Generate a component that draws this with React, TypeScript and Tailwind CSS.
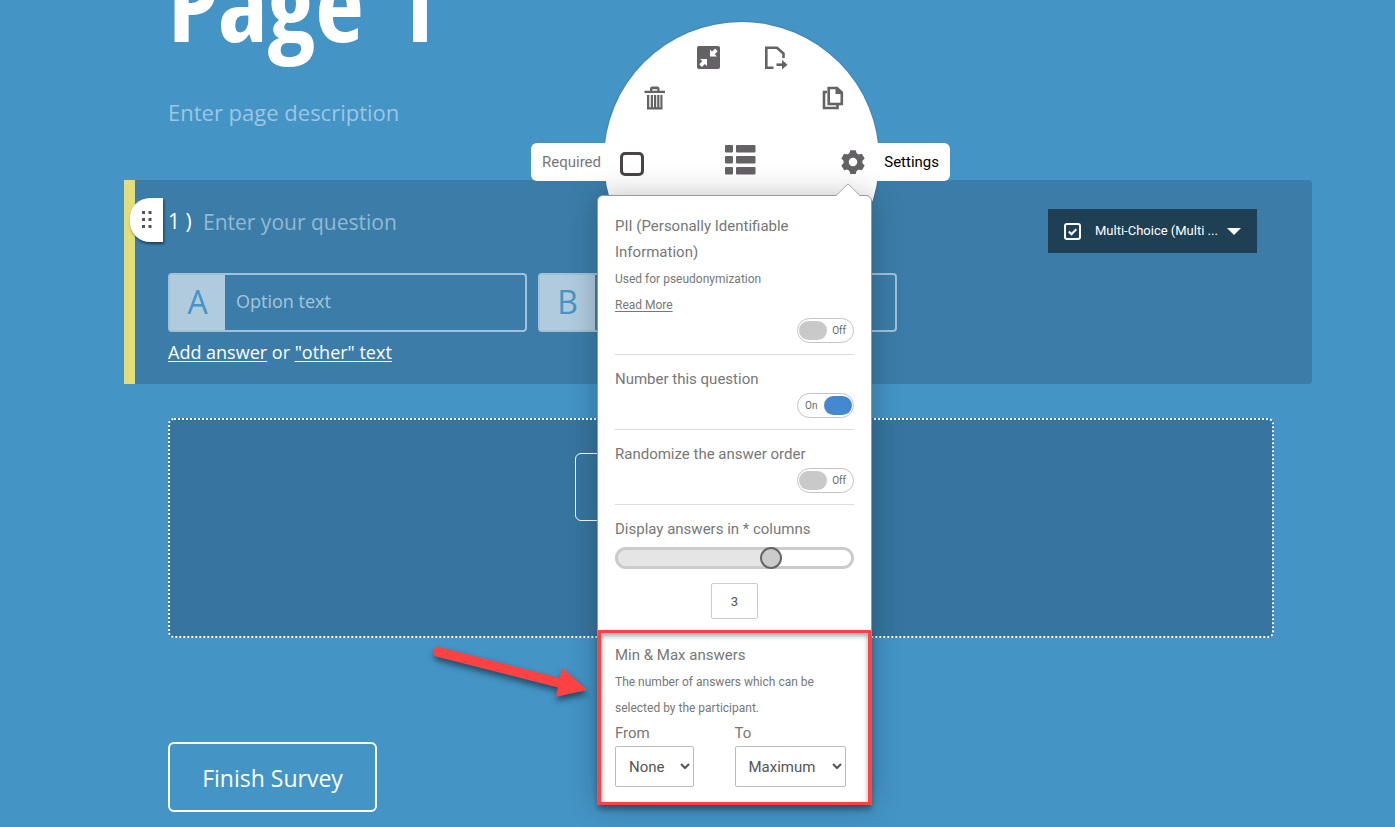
import { useState } from 'react';
import type { ReactNode } from 'react';

/* ---------- icons ---------- */

function TrashIcon() {
  return (
    <svg width="22" height="24" viewBox="0 0 22 24" fill="#646264">
      <path d="M0.500 4.700h5.500V2.600Q6.300 0.500 8 0.500h5.500Q15.200 0.500 15.500 2.600V4.700h5.500v2.300h-20.500zM8.300 4.700h5V3.200h-5z" fillRule="evenodd" />
      <path d="M3 9h2.300V21.200h1.500V9h2.200V21.200h1V9h2.200V21.200h1V9h2.200V21.200h1V9H18.500V23.500H3z" />
    </svg>
  );
}

function CollapseIcon() {
  return (
    <svg width="23" height="23" viewBox="0 0 23 23">
      <rect width="23" height="23" rx="2" fill="#646264" />
      <path d="M13 3.500v7h7l-2.300-2.300 3-3-2.600-2.600-3 3z" fill="#fff" />
      <path d="M10 20v-7H3l2.300 2.300-3 3 2.600 2.600 3-3z" fill="#fff" />
    </svg>
  );
}

function MovePageIcon() {
  return (
    <svg width="24" height="24" viewBox="0 0 24 24" fill="none" stroke="#646264" strokeWidth="2.600">
      <path d="M9.500 21.700H2.300V1.800H13L19.500 7.500V12" />
      <path d="M12.500 18.700H19" />
      <path d="M18 14l5.500 4.700-5.500 4.700z" fill="#646264" stroke="none" />
    </svg>
  );
}

function CopyIcon() {
  return (
    <svg width="22" height="24" viewBox="0 0 22 24" fill="none" stroke="#646264" strokeWidth="2.600">
      <path d="M6.700 2H15L19.800 6.500V18H6.700z" />
      <path d="M13.500 1v7H21L14.500 1z" fill="#646264" stroke="none" />
      <path d="M5 6H2V22H15.500V18" />
    </svg>
  );
}

function ListIcon() {
  return (
    <svg width="31" height="30" viewBox="0 0 31 30" fill="#646264">
      {[0, 11, 22].map((y) => (
        <g key={y}>
          <rect x="0" y={y} width="8" height="7.500" rx="1" />
          <rect x="11" y={y} width="19.500" height="7.500" rx="1" />
        </g>
      ))}
    </svg>
  );
}

function GearIcon() {
  return (
    <svg width="30" height="30" viewBox="-12 -12 24 24" fill="#646264">
      <circle r="5.500" fill="none" stroke="#646264" strokeWidth="4.200" />
      {[0, 60, 120, 180, 240, 300].map((angle) => (
        <path key={angle} d="M-3.200 -6L-2.200 -9.500H2.200L3.200 -6z" transform={`rotate(${angle})`} />
      ))}
    </svg>
  );
}

function GripIcon() {
  return (
    <svg width="10" height="18" viewBox="0 0 10 18" fill="#555">
      {[0, 7, 14].map((y) => (
        <g key={y}>
          <rect x="0" y={y} width="3" height="3" />
          <rect x="6.500" y={y} width="3" height="3" />
        </g>
      ))}
    </svg>
  );
}

/* ---------- settings popover parts ---------- */

function Toggle({ label, initial }: { label: string; initial: boolean }) {
  const [on, setOn] = useState(initial);
  return (
    <label className="relative ml-auto flex h-[25px] w-[57px] cursor-pointer items-center justify-between rounded-full border border-[#c4c4c4] bg-white px-px text-[10px] text-[#666]">
      <input
        type="checkbox"
        className="sr-only"
        aria-label={label}
        checked={on}
        onChange={(e) => setOn(e.target.checked)}
      />
      {on && <span className="pl-1.5">On</span>}
      <span className={`h-[19px] w-7 rounded-full ${on ? 'bg-[#4489d0]' : 'bg-[#c9c9c9]'}`} />
      {!on && <span className="pr-1.5">Off</span>}
    </label>
  );
}

function SettingRow({ title, children }: { title: string; children?: ReactNode }) {
  return (
    <div className="mb-[11px] border-b border-[#dcdcdc] pb-[11px]">
      <p className="mb-px">{title}</p>
      {children}
    </div>
  );
}

function SettingsPopover() {
  const [columns, setColumns] = useState(3);

  return (
    <section
      aria-label="Question settings"
      className="absolute left-[597px] top-[195px] w-[275px] rounded-t-md border border-[#999] bg-white font-['Roboto',sans-serif] text-[15px] leading-[26px] text-[#777] shadow-[0_0_30px_rgba(0,0,0,0.25)]"
    >
      <svg className="absolute -top-[13px] right-[11px]" width="24" height="14" viewBox="0 0 24 14">
        <path d="M0 14V13L12 1l12 12v1z" fill="#fff" />
        <path d="M0 12.500L12 1l12 11.500" fill="none" stroke="#aaa" />
      </svg>

      <div className="px-[17px] pt-[17px]">
        <SettingRow title="PII (Personally Identifiable Information)">
          <p className="text-xs leading-[26px]">Used for pseudonymization</p>
          <p className="text-xs leading-[26px]">
            <a href="#read-more" className="underline underline-offset-2">Read More</a>
          </p>
          <Toggle label="PII" initial={false} />
        </SettingRow>
        <SettingRow title="Number this question">
          <Toggle label="Number this question" initial />
        </SettingRow>
        <SettingRow title="Randomize the answer order">
          <Toggle label="Randomize the answer order" initial={false} />
        </SettingRow>

        <label htmlFor="columns" className="block">Display answers in * columns</label>
        <input
          id="columns"
          type="range"
          min={1}
          max={4}
          value={columns}
          onChange={(e) => setColumns(Number(e.target.value))}
          className="mt-[5px] block h-[22px] w-full appearance-none rounded-full shadow-[inset_0_0_0_3px_#cbcbcb] [&::-webkit-slider-thumb]:size-[22px] [&::-webkit-slider-thumb]:appearance-none [&::-webkit-slider-thumb]:rounded-full [&::-webkit-slider-thumb]:border-2 [&::-webkit-slider-thumb]:border-[#666] [&::-webkit-slider-thumb]:bg-[#cbcbcb]"
          style={{
            background: `linear-gradient(to right, #e5e5e5 ${((columns - 1) / 3) * 100}%, #fff 0)`,
          }}
        />
        <input
          type="text"
          aria-label="Number of columns"
          value={columns}
          readOnly
          className="mx-auto mt-3.5 mb-[11px] block h-9 w-[47px] rounded-xs border border-[#ccc] text-center text-[13px] text-[#555]"
        />
      </div>

      {/* highlighted block */}
      <div className="-mb-px border-3 border-[#fe4242] px-[14px] pt-[9px] pb-[15px] shadow-[0_4px_6px_rgba(0,0,0,0.4),inset_0_3px_5px_rgba(0,0,0,0.35)]">
        <p className="mb-px">Min &amp; Max answers</p>
        <p className="text-xs leading-[26px]">The number of answers which can be selected by the participant.</p>
        <div className="grid grid-cols-2">
          <div>
            <label htmlFor="min" className="block leading-[25px]">From</label>
            <select id="min" className="h-[41px] w-[79px] rounded-xs border border-[#bbb] bg-white pr-0.5 pl-[9px] text-[#555]">
              <option>None</option>
            </select>
          </div>
          <div>
            <label htmlFor="max" className="block leading-[25px]">To</label>
            <select id="max" className="h-[41px] w-[111px] rounded-xs border border-[#bbb] bg-white pr-0.5 pl-[9px] text-[#555]">
              <option>Maximum</option>
            </select>
          </div>
        </div>
      </div>
    </section>
  );
}

/** Round tool menu floating over the active question. */
function QuestionWheel() {
  return (
    <div className="font-['Roboto',sans-serif] text-[15px]">
      <div className="absolute left-[604px] top-[22px] size-[275px] rounded-full bg-white shadow-[0_0_2px_rgba(0,0,0,0.3)]" />
      <label
        htmlFor="required"
        className="absolute left-[531px] top-[143px] flex h-[38px] w-[110px] items-center rounded-md bg-white pl-[11px] text-[#777]"
      >
        Required
      </label>
      <div className="absolute left-[840px] top-[143px] flex h-[38px] w-[110px] items-center justify-end rounded-md bg-white pr-[11px] text-black">
        Settings
      </div>
      <div className="absolute left-[604px] top-[22px] size-[275px] rounded-full">
        <button type="button" aria-label="Delete" className="absolute left-[40px] top-[64px]"><TrashIcon /></button>
        <button type="button" aria-label="Collapse" className="absolute left-[93px] top-[24px]"><CollapseIcon /></button>
        <button type="button" aria-label="Move to page" className="absolute left-[160px] top-[24px]"><MovePageIcon /></button>
        <button type="button" aria-label="Duplicate" className="absolute left-[218px] top-[64px]"><CopyIcon /></button>
        <input
          id="required"
          type="checkbox"
          className="absolute left-[16px] top-[130px] size-6 appearance-none rounded-[5px] border-3 border-[#484447] bg-white"
        />
        <button type="button" aria-label="Question type" className="absolute left-[121px] top-[123px]"><ListIcon /></button>
        <button type="button" aria-label="Settings" className="absolute left-[234px] top-[125px]"><GearIcon /></button>
      </div>
    </div>
  );
}

/* ---------- survey page ---------- */

function AnswerOption({ letter }: { letter: string }) {
  return (
    <div className="flex h-[59px] rounded border-2 border-[#a0c1d7]">
      <span className="flex w-[55px] items-center justify-center bg-[#b0cbdd] pb-0.5 text-[32px] text-[#4594c6]">
        {letter}
      </span>
      <input
        type="text"
        aria-label={`Answer ${letter}`}
        placeholder="Option text"
        className="min-w-0 flex-1 bg-transparent px-[11px] pb-1 text-lg text-white placeholder:text-[#a6c5da]"
      />
    </div>
  );
}

function QuestionCard() {
  return (
    <section className="relative ml-[124px] mr-[83px] h-[204px] rounded-r border-l-[11px] border-[#e2de7d] bg-[#3b7da8] pl-[33px] pr-[45px] pt-[29px]">
      <button
        type="button"
        aria-label="Drag question"
        className="absolute -left-[5px] top-[18px] flex h-11 w-[33px] items-center justify-center rounded-l-[20px] bg-white shadow-[1px_2px_3px_rgba(0,0,0,0.5)]"
      >
        <GripIcon />
      </button>

      <div className="flex h-11 items-center pr-2.5">
        <label htmlFor="question" className="w-[35px] pb-[18px] text-[21px] whitespace-nowrap text-white">1 )</label>
        <input
          id="question"
          type="text"
          placeholder="Enter your question"
          className="min-w-0 flex-1 bg-transparent pb-4 text-[21px] text-white placeholder:text-[#94b9d3]"
        />
        <div className="relative h-11 w-[209px]">
          <select
            aria-label="Question type"
            className="size-full appearance-none bg-[#1e3f54] pl-[47px] font-['Roboto',sans-serif] text-[13px] text-white"
          >
            <option>Multi-Choice (Multi ...</option>
          </select>
          <svg className="pointer-events-none absolute left-4 top-[14px]" width="17" height="17" viewBox="0 0 17 17" fill="none" stroke="#fff" strokeWidth="2">
            <rect x="1" y="1" width="15" height="15" rx="2" />
            <path d="M4.800 8.500l2.700 2.700 4.800-5" />
          </svg>
          <svg className="pointer-events-none absolute right-4 top-[19px]" width="14" height="7" viewBox="0 0 14 7" fill="#fff">
            <path d="M0 0h14L7 7z" />
          </svg>
        </div>
      </div>

      <div className="mt-5 grid grid-cols-3 gap-[11px]">
        <AnswerOption letter="A" />
        <AnswerOption letter="B" />
      </div>
      <p className="mt-[7px] text-lg leading-[26px] text-white">
        <a href="#add-answer" className="underline underline-offset-2">Add answer</a> or{' '}
        <a href="#other" className="underline underline-offset-2">"other" text</a>
      </p>
    </section>
  );
}

function Pointer() {
  return (
    <svg
      className="pointer-events-none absolute left-[425px] top-[640px] drop-shadow-[1px_4px_3px_rgba(0,0,0,0.5)]"
      width="170"
      height="70"
      viewBox="0 0 170 70"
      fill="#fe4242"
    >
      <path d="M13.500 7L134.500 38 137.500 28 162 50 130.500 57 133 47.500 11 16.500A5 5 0 0 1 13.500 7z" />
    </svg>
  );
}

export default function App() {
  return (
    <main className="relative min-h-screen overflow-hidden bg-[#4494c6] pb-[15px] font-['Open_Sans',sans-serif]">
      <header className="-mt-[70px] h-[250px] pl-[168px]">
        <h1 className="h-[164px] font-['Open_Sans_Condensed','Open_Sans',sans-serif] text-[105px] leading-[144px] font-bold text-white">Page 1</h1>
        <input
          type="text"
          aria-label="Page description"
          placeholder="Enter page description"
          className="block h-9 w-[600px] bg-transparent text-[22px] placeholder:text-[#9cc6e2]"
        />
      </header>

      <QuestionCard />

      <div className="mt-[34px] mr-[121px] ml-[168px] flex h-[220px] justify-center rounded-md border-2 border-dotted border-white bg-[#37759f] pt-[33px]">
        <button type="button" aria-label="Add question" className="h-[68px] w-[292px] rounded-md border border-white" />
      </div>

      <button
        type="button"
        className="mt-[104px] ml-[168px] block h-[70px] w-[209px] rounded-md border-2 border-white pt-0.5 text-[23px] text-white"
      >
        Finish Survey
      </button>

      <QuestionWheel />
      <SettingsPopover />
      <Pointer />
    </main>
  );
}
